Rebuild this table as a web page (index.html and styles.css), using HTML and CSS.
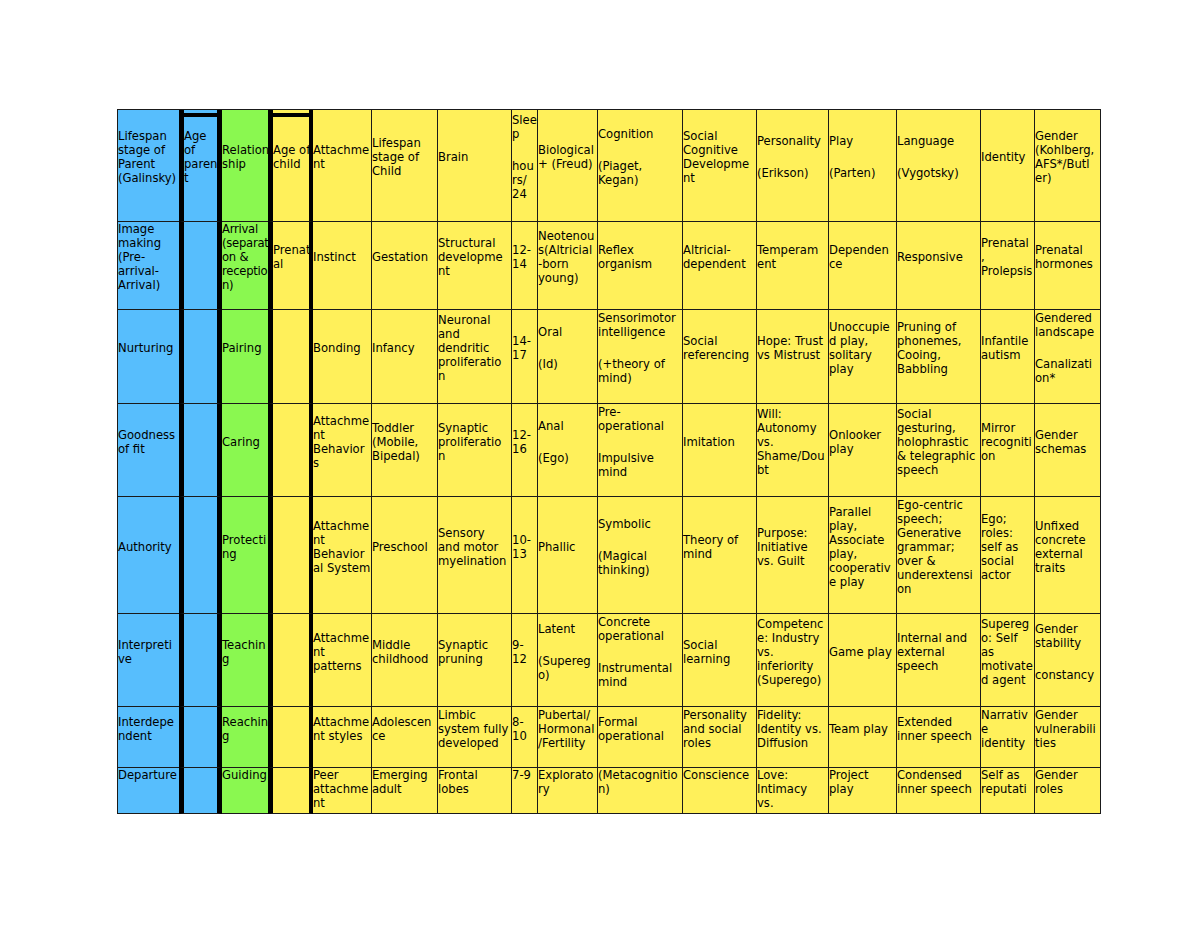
FILE: index.html
```html
<!DOCTYPE html>
<html lang="en">
<head>
<meta charset="utf-8">
<title>Lifespan stages table</title>
<link rel="stylesheet" href="styles.css">
</head>
<body>
<div class="page">
<div class="grid">
<!-- Row 1 -->
<div class="cell"><p>Lifespan<br>stage of<br>Parent<br>(Galinsky)</p></div>
<div class="cell"><p>Age<br>of<br>paren<br>t</p></div>
<div class="cell"><p>Relation<br>ship</p></div>
<div class="cell"><p>Age of<br>child</p></div>
<div class="cell"><p>Attachme<br>nt</p></div>
<div class="cell"><p>Lifespan<br>stage of<br>Child</p></div>
<div class="cell"><p>Brain</p></div>
<div class="cell"><p>Slee<br>p</p><p>hou<br>rs/<br>24</p></div>
<div class="cell"><p>Biological<br>+ (Freud)</p></div>
<div class="cell"><p>Cognition</p><p>(Piaget,<br>Kegan)</p></div>
<div class="cell"><p>Social<br>Cognitive<br>Developme<br>nt</p></div>
<div class="cell"><p>Personality</p><p>(Erikson)</p></div>
<div class="cell"><p>Play</p><p>(Parten)</p></div>
<div class="cell"><p>Language</p><p>(Vygotsky)</p></div>
<div class="cell"><p>Identity</p></div>
<div class="cell"><p>Gender<br>(Kohlberg,<br>AFS*/Butl<br>er)</p></div>
<!-- Row 2 -->
<div class="cell"><p>Image<br>making<br>(Pre-<br>arrival-<br>Arrival)</p></div>
<div class="cell"></div>
<div class="cell tight"><p>Arrival<br>(separati<br>on &amp;<br>receptio<br>n)</p></div>
<div class="cell"><p>Prenat<br>al</p></div>
<div class="cell"><p>Instinct</p></div>
<div class="cell"><p>Gestation</p></div>
<div class="cell"><p>Structural<br>developme<br>nt</p></div>
<div class="cell"><p>12-<br>14</p></div>
<div class="cell"><p>Neotenou<br>s(Altricial<br>-born<br>young)</p></div>
<div class="cell"><p>Reflex<br>organism</p></div>
<div class="cell"><p>Altricial-<br>dependent</p></div>
<div class="cell"><p>Temperam<br>ent</p></div>
<div class="cell"><p>Dependen<br>ce</p></div>
<div class="cell"><p>Responsive</p></div>
<div class="cell"><p>Prenatal<br>,<br>Prolepsis</p></div>
<div class="cell"><p>Prenatal<br>hormones</p></div>
<!-- Row 3 -->
<div class="cell"><p>Nurturing</p></div>
<div class="cell"></div>
<div class="cell"><p>Pairing</p></div>
<div class="cell"></div>
<div class="cell"><p>Bonding</p></div>
<div class="cell"><p>Infancy</p></div>
<div class="cell"><p>Neuronal<br>and<br>dendritic<br>proliferatio<br>n</p></div>
<div class="cell"><p>14-<br>17</p></div>
<div class="cell"><p>Oral</p><p>(Id)</p></div>
<div class="cell"><p>Sensorimotor<br>intelligence</p><p>(+theory of<br>mind)</p></div>
<div class="cell"><p>Social<br>referencing</p></div>
<div class="cell"><p>Hope: Trust<br>vs Mistrust</p></div>
<div class="cell"><p>Unoccupie<br>d play,<br>solitary<br>play</p></div>
<div class="cell"><p>Pruning of<br>phonemes,<br>Cooing,<br>Babbling</p></div>
<div class="cell"><p>Infantile<br>autism</p></div>
<div class="cell"><p>Gendered<br>landscape</p><p>Canalizati<br>on*</p></div>
<!-- Row 4 -->
<div class="cell"><p>Goodness<br>of fit</p></div>
<div class="cell"></div>
<div class="cell"><p>Caring</p></div>
<div class="cell"></div>
<div class="cell"><p>Attachme<br>nt<br>Behavior<br>s</p></div>
<div class="cell"><p>Toddler<br>(Mobile,<br>Bipedal)</p></div>
<div class="cell"><p>Synaptic<br>proliferatio<br>n</p></div>
<div class="cell"><p>12-<br>16</p></div>
<div class="cell"><p>Anal</p><p>(Ego)</p></div>
<div class="cell"><p>Pre-<br>operational</p><p>Impulsive<br>mind</p></div>
<div class="cell"><p>Imitation</p></div>
<div class="cell"><p>Will:<br>Autonomy<br>vs.<br>Shame/Dou<br>bt</p></div>
<div class="cell"><p>Onlooker<br>play</p></div>
<div class="cell"><p>Social<br>gesturing,<br>holophrastic<br>&amp; telegraphic<br>speech</p></div>
<div class="cell"><p>Mirror<br>recogniti<br>on</p></div>
<div class="cell"><p>Gender<br>schemas</p></div>
<!-- Row 5 -->
<div class="cell"><p>Authority</p></div>
<div class="cell"></div>
<div class="cell"><p>Protecti<br>ng</p></div>
<div class="cell"></div>
<div class="cell"><p>Attachme<br>nt<br>Behavior<br>al System</p></div>
<div class="cell"><p>Preschool</p></div>
<div class="cell"><p>Sensory<br>and motor<br>myelination</p></div>
<div class="cell"><p>10-<br>13</p></div>
<div class="cell"><p>Phallic</p></div>
<div class="cell"><p>Symbolic</p><p>(Magical<br>thinking)</p></div>
<div class="cell"><p>Theory of<br>mind</p></div>
<div class="cell"><p>Purpose:<br>Initiative<br>vs. Guilt</p></div>
<div class="cell"><p>Parallel<br>play,<br>Associate<br>play,<br>cooperativ<br>e play</p></div>
<div class="cell"><p>Ego-centric<br>speech;<br>Generative<br>grammar;<br>over &amp;<br>underextensi<br>on</p></div>
<div class="cell"><p>Ego;<br>roles:<br>self as<br>social<br>actor</p></div>
<div class="cell"><p>Unfixed<br>concrete<br>external<br>traits</p></div>
<!-- Row 6 -->
<div class="cell"><p>Interpreti<br>ve</p></div>
<div class="cell"></div>
<div class="cell"><p>Teachin<br>g</p></div>
<div class="cell"></div>
<div class="cell"><p>Attachme<br>nt<br>patterns</p></div>
<div class="cell"><p>Middle<br>childhood</p></div>
<div class="cell"><p>Synaptic<br>pruning</p></div>
<div class="cell"><p>9-<br>12</p></div>
<div class="cell"><p>Latent</p><p>(Supereg<br>o)</p></div>
<div class="cell"><p>Concrete<br>operational</p><p>Instrumental<br>mind</p></div>
<div class="cell"><p>Social<br>learning</p></div>
<div class="cell"><p>Competenc<br>e: Industry<br>vs.<br>inferiority<br>(Superego)</p></div>
<div class="cell"><p>Game play</p></div>
<div class="cell"><p>Internal and<br>external<br>speech</p></div>
<div class="cell"><p>Supereg<br>o: Self<br>as<br>motivate<br>d agent</p></div>
<div class="cell"><p>Gender<br>stability</p><p>constancy</p></div>
<!-- Row 7 -->
<div class="cell"><p>Interdepe<br>ndent</p></div>
<div class="cell"></div>
<div class="cell"><p>Reachin<br>g</p></div>
<div class="cell"></div>
<div class="cell"><p>Attachme<br>nt styles</p></div>
<div class="cell"><p>Adolescen<br>ce</p></div>
<div class="cell"><p>Limbic<br>system fully<br>developed</p></div>
<div class="cell"><p>8-<br>10</p></div>
<div class="cell"><p>Pubertal/<br>Hormonal<br>/Fertility</p></div>
<div class="cell"><p>Formal<br>operational</p></div>
<div class="cell"><p>Personality<br>and social<br>roles</p></div>
<div class="cell"><p>Fidelity:<br>Identity vs.<br>Diffusion</p></div>
<div class="cell"><p>Team play</p></div>
<div class="cell"><p>Extended<br>inner speech</p></div>
<div class="cell"><p>Narrativ<br>e<br>identity</p></div>
<div class="cell"><p>Gender<br>vulnerabili<br>ties</p></div>
<!-- Row 8 -->
<div class="cell"><p>Departure</p></div>
<div class="cell"></div>
<div class="cell"><p>Guiding</p></div>
<div class="cell"></div>
<div class="cell"><p>Peer<br>attachme<br>nt</p></div>
<div class="cell"><p>Emerging<br>adult</p></div>
<div class="cell"><p>Frontal<br>lobes</p></div>
<div class="cell"><p>7-9</p></div>
<div class="cell"><p>Explorato<br>ry</p></div>
<div class="cell"><p>(Metacognitio<br>n)</p></div>
<div class="cell"><p>Conscience</p></div>
<div class="cell"><p>Love:<br>Intimacy<br>vs.</p></div>
<div class="cell"><p>Project<br>play</p></div>
<div class="cell"><p>Condensed<br>inner speech</p></div>
<div class="cell"><p>Self as<br>reputati</p></div>
<div class="cell"><p>Gender<br>roles</p></div>
</div>
</div>
</body>
</html>
```
FILE: styles.css
```css
html, body {
  margin: 0;
  padding: 0;
  background: #ffffff;
}

.page {
  padding: 109px 0 0 117px;
}

.grid {
  display: grid;
  grid-template-columns: 61px 43px 46px 45px 59px 66px 74px 26px 60px 85px 74px 72px 68px 84px 54px 66px;
  grid-template-rows: 112px 88px 94px 93px 117px 93px 61px 46px;
  width: 983px;
  border-top: 1px solid #1a1a1a;
  border-left: 1px solid #1a1a1a;
  font-family: "DejaVu Sans", Verdana, sans-serif;
  font-size: 11.6px;
  line-height: 14px;
  color: #000;
}

.cell {
  box-sizing: border-box;
  display: flex;
  flex-direction: column;
  justify-content: center;
  padding: 0 0 17px 0;
  border-right: 1px solid #1a1a1a;
  border-bottom: 1px solid #1a1a1a;
  background: #fff05a;
  white-space: nowrap;
  min-width: 0;
}

.cell p {
  margin: 0;
}

.cell p + p {
  margin-top: 18px;
}

.tight {
  letter-spacing: -0.25px;
}

/* column 1: parent lifespan stage */
.cell:nth-child(16n+1) {
  background: #57befd;
  border-right: 0;
}

/* column 2: age of parent, heavy framed */
.cell:nth-child(16n+2) {
  background: #57befd;
  border-left: 5px solid #000;
  border-right: 5px solid #000;
}

/* column 3: relationship */
.cell:nth-child(16n+3) {
  background: #8af850;
  border-right: 0;
}

/* column 4: age of child, heavy framed */
.cell:nth-child(16n+4) {
  border-left: 5px solid #000;
  border-right: 4px solid #000;
}

.cell:nth-child(2) {
  box-shadow: inset 0 3px 0 #57befd, inset 0 7px 0 #000;
}

.cell:nth-child(4) {
  box-shadow: inset 0 3px 0 #fff05a, inset 0 7px 0 #000;
}

/* last row is top aligned */
.cell:nth-child(n+113) {
  justify-content: flex-start;
  padding-bottom: 0;
}
```
